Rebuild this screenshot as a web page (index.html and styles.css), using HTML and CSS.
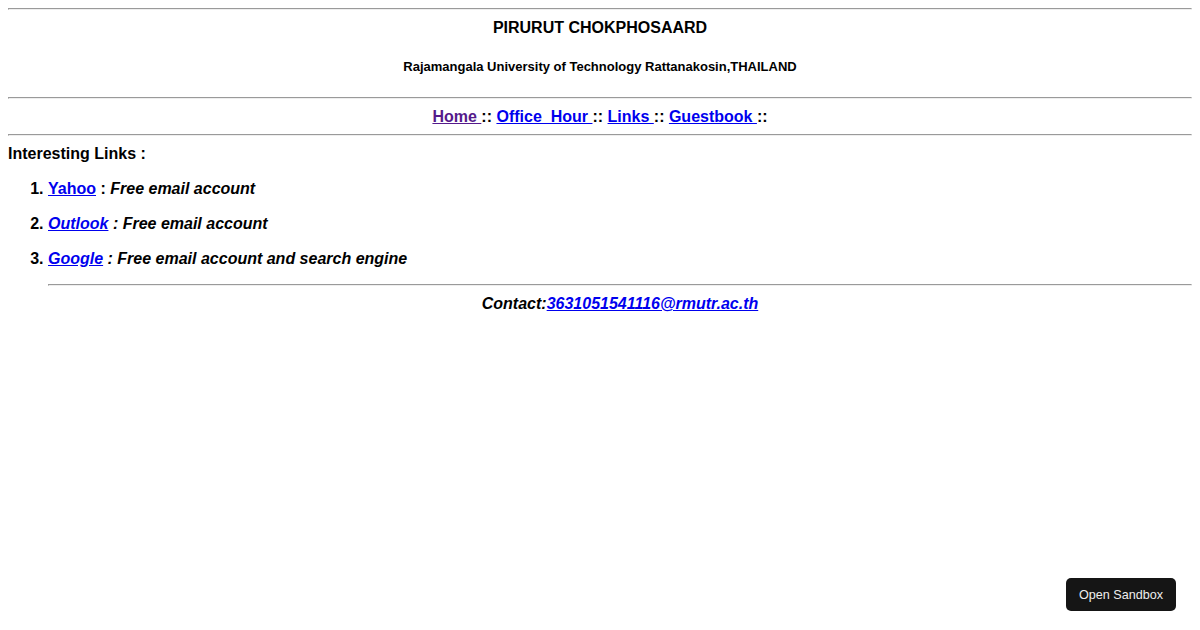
FILE: index.html
```html
<!DOCTYPE html>
<html lang="en">
<head>
    <meta charset="UTF-8">
    <title>PIRURUT CHOKPHOSAARD - Links</title>
    <link rel="stylesheet" href="styles.css">
</head>
<body>
    <hr class="top-rule">
    <div class="masthead">
        <div class="name">PIRURUT CHOKPHOSAARD</div>
        <h5 class="org">Rajamangala University of Technology Rattanakosin,THAILAND</h5>
    </div>
    <hr>
    <div class="menu">
        <a class="seen" href="#">Home </a>:: <a href="#">Office_Hour </a>:: <a href="#">Links </a>:: <a href="#">Guestbook </a>::
    </div>
    <hr>
    <div class="section-title">Interesting Links :</div>
    <ol class="links">
        <li><a href="#">Yahoo</a> : <i>Free email account</i></li>
        <li><i><a href="#">Outlook</a> : Free email account</i></li>
        <li><i><a href="#">Google</a> : Free email account and search engine</i></li>
    </ol>
    <div class="footer">
        <hr>
        <div class="contact"><i>Contact:<a href="#">3631051541116@rmutr.ac.th</a></i></div>
    </div>

    <button class="sandbox-btn">Open Sandbox</button>
</body>
</html>
```

FILE: styles.css
```css
body {
    font-family: "Liberation Sans", Arial, sans-serif;
    font-size: 16px;
    font-weight: bold;
    line-height: 19px;
    color: black;
    margin: 8px;
}

hr {
    margin: 8px 0;
}

hr.top-rule {
    margin-top: 0;
}

a {
    color: #0000ee;
    text-decoration: underline;
}

a.seen {
    color: #551a8b;
}

.masthead {
    text-align: center;
}

.org {
    font-size: 13px;
    line-height: 15px;
    margin: 22px 0 23px;
}

.menu {
    text-align: center;
}

.links {
    margin: 0;
    padding-left: 40px;
}

.links li {
    margin: 16px 0;
}

.footer {
    margin-left: 40px;
    margin-top: 16px;
}

.contact {
    text-align: center;
}

.sandbox-btn {
    position: fixed;
    right: 24px;
    bottom: 19px;
    width: 110px;
    height: 33px;
    background-color: #151515;
    color: #eeeeee;
    border: none;
    border-radius: 5px;
    font-family: "Liberation Sans", Arial, sans-serif;
    font-size: 12.6px;
    font-weight: normal;
    padding: 0;
    cursor: pointer;
}
```
